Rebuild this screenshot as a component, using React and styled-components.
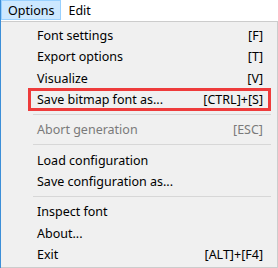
import React from "react";
import styled, { createGlobalStyle } from "styled-components";

const Global = createGlobalStyle`
  html, body { margin: 0; padding: 0; background: #ffffff; }
  body { font-family: "Noto Sans", "Open Sans", sans-serif; font-size: 12px; color: #000; }
`;

const Frame = styled.div`
  width: 278px;
  height: 268px;
  border-left: 1px solid #3c8fd8;
  box-sizing: border-box;
  display: flex;
  flex-direction: column;
  overflow: hidden;
`;

const MenuBar = styled.div`
  display: flex;
  height: 21px;
  align-items: stretch;
  flex-shrink: 0;
`;

const MenuTitle = styled.div`
  display: flex;
  align-items: center;
  padding: 0 6px 0 6px;
  border: 1px solid ${(p) => (p.$open ? "#99d1ff" : "transparent")};
  background: ${(p) => (p.$open ? "#cce8ff" : "transparent")};
  box-sizing: border-box;
  height: 20px;
  font-size: 12.5px;
`;

const Dropdown = styled.div`
  flex: 1;
  background: #f0f0f0;
  border: 1px solid #cccccc;
  border-left: none;
  box-sizing: border-box;
  padding: 3px 2px 2px 1px;
  display: flex;
  flex-direction: column;
`;

const Item = styled.div`
  position: relative;
  display: flex;
  justify-content: space-between;
  align-items: center;
  height: 21.3px;
  flex-shrink: 0;
  padding: 0 12px 0 35px;
  color: ${(p) => (p.$disabled ? "#7a7a7a" : "#000")};
  font-size: 12.5px;
`;

const Highlight = styled.div`
  position: absolute;
  left: 26px;
  right: 4px;
  top: -1px;
  bottom: -1px;
  border: 3px solid #ee3b3b;
  pointer-events: none;
`;

const Separator = styled.div`
  height: 1px;
  flex-shrink: 0;
  background: #d7d7d7;
  margin: 4px 4px 4px 31px;
`;

const Shortcut = styled.span``;

const items = [
  { label: "Font settings", key: "[F]" },
  { label: "Export options", key: "[T]" },
  { label: "Visualize", key: "[V]" },
  { label: "Save bitmap font as...", key: "[CTRL]+[S]", hl: true },
  "sep",
  { label: "Abort generation", key: "[ESC]", disabled: true },
  "sep",
  { label: "Load configuration" },
  { label: "Save configuration as..." },
  "sep",
  { label: "Inspect font" },
  { label: "About..." },
  { label: "Exit", key: "[ALT]+[F4]" },
];

export default function App() {
  return (
    <>
      <Global />
      <Frame>
        <MenuBar>
          <MenuTitle $open>Options</MenuTitle>
          <MenuTitle>Edit</MenuTitle>
        </MenuBar>
        <Dropdown>
          {items.map((it, i) =>
            it === "sep" ? (
              <Separator key={i} />
            ) : (
              <Item key={i} $disabled={it.disabled}>
                <span>{it.label}</span>
                {it.key && <Shortcut>{it.key}</Shortcut>}
                {it.hl && <Highlight />}
              </Item>
            )
          )}
        </Dropdown>
      </Frame>
    </>
  );
}
